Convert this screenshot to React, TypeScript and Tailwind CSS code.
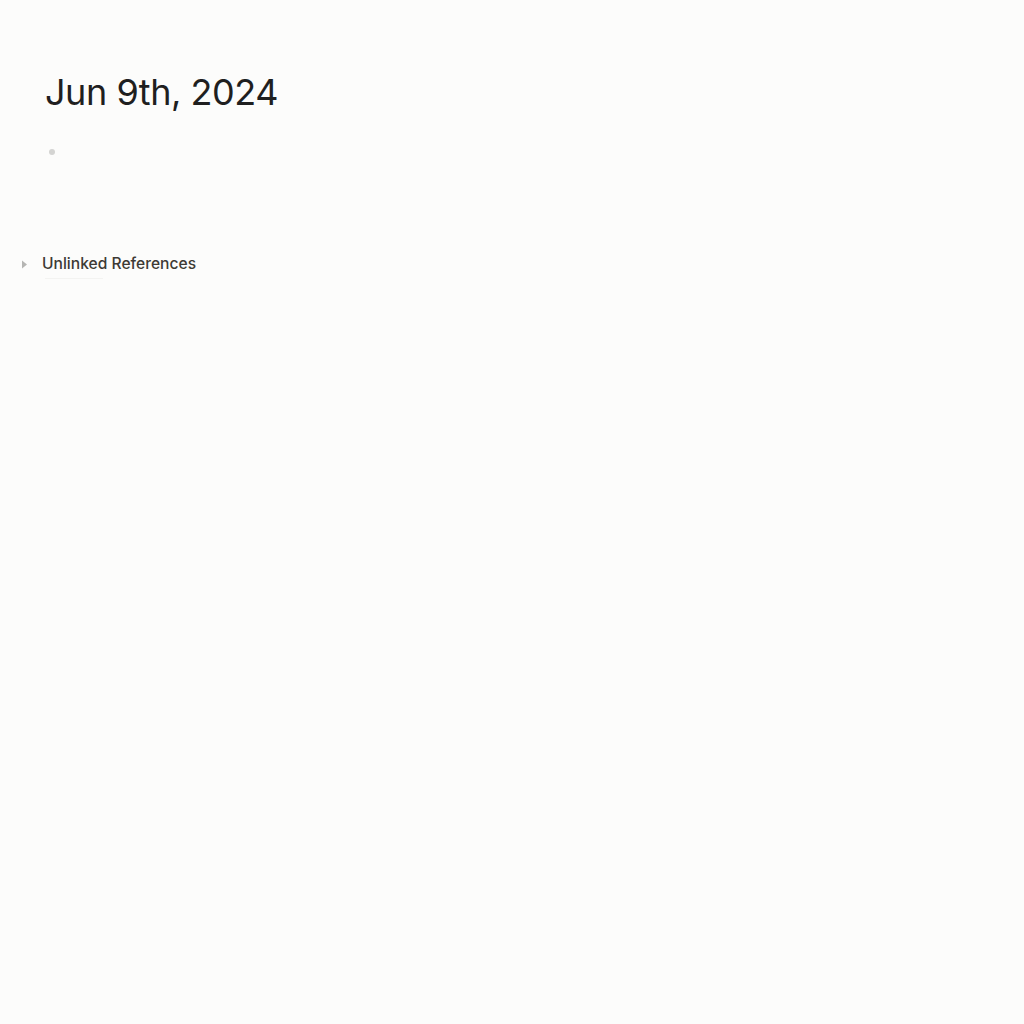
export default function App() {
  return (
    <div
      className="min-h-screen w-full bg-[#fcfcfb] text-[#262626]"
      style={{ fontFamily: "Inter, 'Noto Sans', sans-serif" }}
    >
      <div className="pt-[70px] pl-[45px]">
        <h1 className="text-[36px] leading-[44px] font-normal tracking-[-0.45px] text-[#1f1f1f]">
          Jun 9th, 2024
        </h1>
        <div className="mt-[28px] flex h-[20px] items-center pl-[4px]">
          <span className="block h-[6px] w-[6px] rounded-full bg-[#d4d4d2]" />
        </div>
      </div>

      <div className="mt-[92px] flex items-center pl-[21px]">
        <svg width="7" height="9" viewBox="0 0 7 9" className="mr-[14px] mb-[5px]">
          <path d="M1 0.5 L6 4.5 L1 8.5 Z" fill="#b5b5b3" />
        </svg>
        <div className="flex flex-col">
          <span className="text-[15.6px] leading-[20px] font-medium text-[#3d3a35]">
            Unlinked References
          </span>
          <span className="mt-[4px] ml-[3px] block h-[1px] w-[58px] bg-[#f3f3f1]" />
        </div>
      </div>
    </div>
  );
}
